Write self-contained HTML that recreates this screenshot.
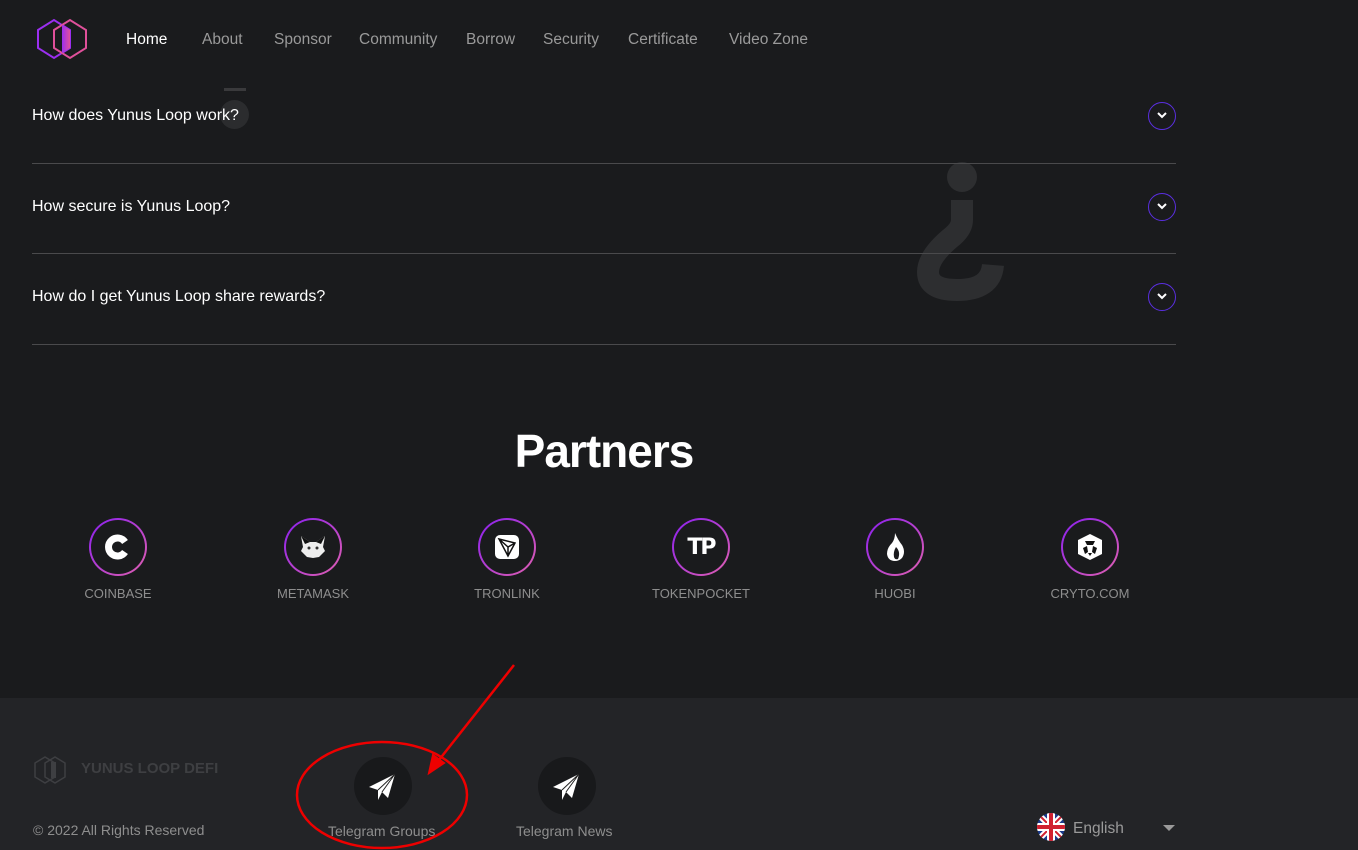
<!DOCTYPE html>
<html><head><meta charset="utf-8"><style>
*{margin:0;padding:0;box-sizing:border-box}
body{width:1358px;height:850px;background:#1a1b1d;font-family:"Liberation Sans",sans-serif;position:relative;overflow:hidden;color:#fff}
.nav a{position:absolute;top:31px;font-size:15.5px;color:#9a9a9a;text-decoration:none}
.q{position:absolute;left:32px;font-size:16px;color:#fff}
.line{position:absolute;left:32px;width:1144px;height:1px;background:#4a4a4c}
.chev{position:absolute;left:1148px;width:28px;height:28px;border:1.5px solid #5a2fe0;border-radius:50%}
.chev svg{position:absolute;left:7px;top:8px}
.p{position:absolute;top:518px;width:58px;height:58px;border-radius:50%;background:linear-gradient(135deg,#8a1ff0,#e060b0);padding:2px}
.p .in{width:100%;height:100%;border-radius:50%;background:#1a1b1d;display:flex;align-items:center;justify-content:center}
.pl{position:absolute;top:586px;font-size:13px;color:#8e8e8e;width:160px;text-align:center}
.foot{position:absolute;left:0;top:698px;width:1358px;height:152px;background:#232427}
.tg{position:absolute;top:757px;width:58px;height:58px;border-radius:50%;background:#18191b}
.tg svg{position:absolute;left:13px;top:13px}
.tl{position:absolute;top:823px;font-size:14px;color:#8e8e8e}
</style></head><body>
<svg style="position:absolute;left:36px;top:18px" width="52" height="42" viewBox="0 0 52 42">
<defs><linearGradient id="lg" x1="0" x2="1"><stop offset="0" stop-color="#9b2ff0"/><stop offset="1" stop-color="#e0509a"/></linearGradient></defs>
<polygon points="2,12 18,2 34,12 34,30 18,40 2,30" fill="none" stroke="#9b2ff0" stroke-width="2"/>
<polygon points="18,12 34,2 50,12 50,30 34,40 18,30" fill="none" stroke="#e0509a" stroke-width="2"/>
<polygon points="26,7 34,12 34,30 26,35" fill="url(#lg)"/>
</svg>
<div class="nav">
<a style="left:126px;color:#fff">Home</a><a style="left:202px">About</a><a style="left:274px">Sponsor</a><a style="left:359px">Community</a><a style="left:466px">Borrow</a><a style="left:543px">Security</a><a style="left:628px">Certificate</a><a style="left:729px">Video Zone</a>
</div>
<div style="position:absolute;left:224px;top:88px;width:22px;height:3px;background:#3a3a3c"></div>
<div style="position:absolute;left:220px;top:100px;width:29px;height:29px;border-radius:50%;background:#2b2c2e"></div>
<svg style="position:absolute;left:915px;top:160px" width="95" height="145" viewBox="0 0 95 145">
<circle cx="47" cy="17" r="15" fill="#2d2e30"/>
<path d="M47 40 L47 60 Q47 68 38 76 Q13 96 13 112 Q13 130 42 130 Q76 130 78 105" fill="none" stroke="#2d2e30" stroke-width="22"/>
</svg>
<div class="q" style="top:107px">How does Yunus Loop work?</div>
<div class="q" style="top:198px">How secure is Yunus Loop?</div>
<div class="q" style="top:288px">How do I get Yunus Loop share rewards?</div>
<div class="line" style="top:163px"></div><div class="line" style="top:253px"></div><div class="line" style="top:344px"></div>
<div class="chev" style="top:102px"><svg width="12" height="9"><path d="M2 2 L6 6 L10 2" fill="none" stroke="#fff" stroke-width="2"/></svg></div>
<div class="chev" style="top:193px"><svg width="12" height="9"><path d="M2 2 L6 6 L10 2" fill="none" stroke="#fff" stroke-width="2"/></svg></div>
<div class="chev" style="top:283px"><svg width="12" height="9"><path d="M2 2 L6 6 L10 2" fill="none" stroke="#fff" stroke-width="2"/></svg></div>
<div style="position:absolute;left:0;width:1208px;top:424px;text-align:center;font-size:46px;font-weight:bold;letter-spacing:-1px">Partners</div>

<div class="p" style="left:89px"><div class="in"><svg width="26" height="26" viewBox="0 0 26 26"><path d="M20 8 A9 9 0 1 0 20 18" fill="none" stroke="#fff" stroke-width="7"/></svg></div></div>
<div class="p" style="left:284px"><div class="in"><svg width="26" height="24" viewBox="0 0 26 24"><path d="M1 1 L10 7 L16 7 L25 1 L23 12 L25 16 L19 22 L13 23 L7 22 L1 16 L3 12Z" fill="#eee"/><path d="M1 1 L10 7 L5 9Z M25 1 L16 7 L21 9Z" fill="#111"/><circle cx="9" cy="13" r="1.5" fill="#333"/><circle cx="17" cy="13" r="1.5" fill="#333"/></svg></div></div>
<div class="p" style="left:478px"><div class="in"><svg width="26" height="26" viewBox="0 0 26 26"><rect x="1" y="1" width="24" height="24" rx="5" fill="#fff"/><path d="M5 5 L21 9 L14 22Z M5 5 L14 13 L21 9 M14 13 L14 22" fill="none" stroke="#111" stroke-width="1.5"/></svg></div></div>
<div class="p" style="left:672px"><div class="in"><span style="font-weight:900;font-size:22px;letter-spacing:-2px;font-family:'DejaVu Sans',sans-serif">TP</span></div></div>
<div class="p" style="left:866px"><div class="in"><svg width="20" height="30" viewBox="0 0 20 30"><path d="M10 1 Q13 8 17 13 Q21 20 17 26 Q14 29 10 29 Q3 29 2 22 Q2 16 7 11 Q10 7 10 1Z" fill="#fff"/><path d="M11 15 Q16 20 13 27 Q10 28 9 25 Q8 20 11 15Z" fill="#1a1b1d"/></svg></div></div>
<div class="p" style="left:1061px"><div class="in"><svg width="26" height="28" viewBox="0 0 26 28"><polygon points="13,1 25,7 25,21 13,27 1,21 1,7" fill="#fff"/><path d="M8 8 H18 L16 12 H10Z M6 15 L10 13 L11 19 L8 21Z M20 15 L16 13 L15 19 L18 21Z M11 20 H15 L13 23Z" fill="#111"/></svg></div></div>
<div class="pl" style="left:38px">COINBASE</div><div class="pl" style="left:233px">METAMASK</div><div class="pl" style="left:427px">TRONLINK</div><div class="pl" style="left:621px">TOKENPOCKET</div><div class="pl" style="left:815px">HUOBI</div><div class="pl" style="left:1010px">CRYTO.COM</div>

<div class="foot"></div>
<svg style="position:absolute;left:33px;top:755px" width="40" height="30" viewBox="0 0 40 30"><polygon points="2,8 12,2 22,8 22,22 12,28 2,22" fill="none" stroke="#3e3f42" stroke-width="1.5"/><polygon points="12,8 22,2 32,8 32,22 22,28 12,22" fill="none" stroke="#3e3f42" stroke-width="1.5"/><rect x="18" y="7" width="5" height="16" fill="#3e3f42"/></svg>
<div style="position:absolute;left:81px;top:760px;font-size:15px;font-weight:bold;color:#3e3f42">YUNUS LOOP DEFI</div>
<div style="position:absolute;left:33px;top:822px;font-size:14px;color:#8e8e8e">© 2022 All Rights Reserved</div>
<div class="tg" style="left:354px"><svg width="32" height="32" viewBox="0 0 32 32"><path d="M2 17 L28 4 L21 28 L15 22 L11 30 L11 20Z" fill="#fff"/><path d="M11 20 L28 4 L15 22" fill="none" stroke="#222" stroke-width="1"/></svg></div>
<div class="tg" style="left:538px"><svg width="32" height="32" viewBox="0 0 32 32"><path d="M2 17 L28 4 L21 28 L15 22 L11 30 L11 20Z" fill="#fff"/><path d="M11 20 L28 4 L15 22" fill="none" stroke="#222" stroke-width="1"/></svg></div>
<div class="tl" style="left:328px">Telegram Groups</div><div class="tl" style="left:516px">Telegram News</div>
<svg style="position:absolute;left:1036px;top:812px" width="30" height="30" viewBox="0 0 30 30"><defs><clipPath id="c"><circle cx="15" cy="15" r="14"/></clipPath></defs><g clip-path="url(#c)"><rect width="30" height="30" fill="#1a3a8c"/><path d="M0 0 L30 30 M30 0 L0 30" stroke="#fff" stroke-width="6"/><path d="M0 0 L30 30 M30 0 L0 30" stroke="#d02030" stroke-width="2"/><path d="M15 0 V30 M0 15 H30" stroke="#fff" stroke-width="8"/><path d="M15 0 V30 M0 15 H30" stroke="#d02030" stroke-width="4"/></g></svg>
<div style="position:absolute;left:1073px;top:820px;font-size:15.5px;color:#9a9a9a">English</div>
<div style="position:absolute;left:1163px;top:825px;border-left:6px solid transparent;border-right:6px solid transparent;border-top:6px solid #9a9a9a"></div>
<svg style="position:absolute;left:0;top:0" width="1358" height="850"><path d="M514 665 L435 765" stroke="#e00" stroke-width="2.5" fill="none"/><path d="M429 773 L433 755 L444 763Z" fill="#e00" stroke="#e00" stroke-width="2"/><ellipse cx="382" cy="795" rx="85" ry="53" fill="none" stroke="#e00" stroke-width="2.5"/></svg>
</body></html>
